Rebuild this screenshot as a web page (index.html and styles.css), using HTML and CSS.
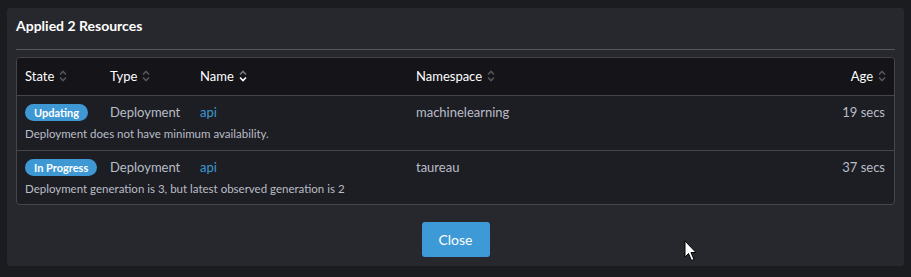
FILE: index.html
```html
<!DOCTYPE html>
<html>
<head>
<meta charset="utf-8">
<link rel="stylesheet" href="styles.css">
</head>
<body>
<div class="panel">
  <h2 class="title">Applied 2 Resources</h2>
  <div class="rule"></div>
  <div class="table">
    <div class="row head">
      <div class="c state">State <span class="sort"><svg width="8" height="12" viewBox="0 0 8 12"><path d="M1 4.5 4 1.5 7 4.5M1 7.5 4 10.5 7 7.5" fill="none" stroke="currentColor" stroke-width="1.6"/></svg></span></div>
      <div class="c type">Type <span class="sort"><svg width="8" height="12" viewBox="0 0 8 12"><path d="M1 4.5 4 1.5 7 4.5M1 7.5 4 10.5 7 7.5" fill="none" stroke="currentColor" stroke-width="1.6"/></svg></span></div>
      <div class="c name">Name <span class="sort active"><svg width="8" height="12" viewBox="0 0 8 12"><path d="M1 4.5 4 1.5 7 4.5" fill="none" stroke="#77787c" stroke-width="1.6"/><path d="M1 7.5 4 10.5 7 7.5" fill="none" stroke="#ffffff" stroke-width="1.6"/></svg></span></div>
      <div class="c ns">Namespace <span class="sort"><svg width="8" height="12" viewBox="0 0 8 12"><path d="M1 4.5 4 1.5 7 4.5M1 7.5 4 10.5 7 7.5" fill="none" stroke="currentColor" stroke-width="1.6"/></svg></span></div>
      <div class="c age">Age <span class="sort"><svg width="8" height="12" viewBox="0 0 8 12"><path d="M1 4.5 4 1.5 7 4.5M1 7.5 4 10.5 7 7.5" fill="none" stroke="currentColor" stroke-width="1.6"/></svg></span></div>
    </div>
    <div class="item">
      <div class="row">
        <div class="c state"><span class="badge">Updating</span></div>
        <div class="c type">Deployment</div>
        <div class="c name"><a class="link">api</a></div>
        <div class="c ns">machinelearning</div>
        <div class="c age">19 secs</div>
      </div>
      <div class="msg">Deployment does not have minimum availability.</div>
    </div>
    <div class="item">
      <div class="row">
        <div class="c state"><span class="badge">In Progress</span></div>
        <div class="c type">Deployment</div>
        <div class="c name"><a class="link">api</a></div>
        <div class="c ns">taureau</div>
        <div class="c age">37 secs</div>
      </div>
      <div class="msg">Deployment generation is 3, but latest observed generation is 2</div>
    </div>
  </div>
  <div class="actions">
    <button class="btn">Close</button>
  </div>
</div>
<svg class="cursor" width="14" height="22" viewBox="0 0 14 22"><path d="M1 1V17L4.5 13.5 7.5 20.5 10 19.5 7 12.5H12Z" fill="#fff" stroke="#000" stroke-width="1"/></svg>
</body>
</html>
```

FILE: styles.css
```css
html, body {
  margin: 0;
  padding: 0;
  background: #1b1c20;
  width: 911px;
  height: 277px;
  overflow: hidden;
}
body {
  padding: 8px 7px 0 7px;
  box-sizing: border-box;
  font-family: Lato, "Liberation Sans", sans-serif;
  position: relative;
}
.panel {
  background: #27282d;
  height: 258px;
  border-radius: 3px;
  padding: 0 9px;
  box-sizing: border-box;
}
.title {
  margin: 0;
  padding: 9px 0 0 0;
  height: 40px;
  box-sizing: border-box;
  font-size: 14px;
  font-weight: 700;
  color: #ffffff;
}
.rule {
  height: 1px;
  background: #55565c;
  margin-top: 1px;
}
.table {
  margin-top: 7px;
  border: 1px solid #45464b;
  border-radius: 4px;
  background: #1d1e23;
  overflow: hidden;
}
.row {
  display: flex;
  align-items: center;
  font-size: 13px;
  color: #b9bdc7;
}
.row.head {
  background: #141419;
  height: 38px;
  padding-bottom: 2px;
  box-sizing: border-box;
  color: #ffffff;
  border-bottom: 1px solid #45464b;
}
.c { display: flex; align-items: center; }
.state { width: 85px; padding-left: 8px; }
.type { width: 90px; }
.name { width: 216px; }
.ns { flex: 1; }
.age { justify-content: flex-end; padding-right: 9px; }
.row.head .age { padding-right: 8px; }
.sort {
  display: inline-flex;
  margin-left: 5px;
  color: #55565b;
}
.item {
  border-top: 1px solid #45464b;
  height: 54px;
  box-sizing: border-box;
  padding-top: 7px;
}
.row.head + .item { border-top: 0; height: 54px; }
.item .row { height: 18px; }
.badge {
  background: #3d98d4;
  color: #ffffff;
  font-size: 11px;
  font-weight: 700;
  border-radius: 9px;
  padding: 0 9px;
  height: 17px;
  line-height: 17px;
  display: inline-block;
}
.link { color: #3d98d4; }
.msg {
  padding-left: 8px;
  margin-top: 6px;
  font-size: 11.5px;
  color: #b9bdc7;
}
.actions {
  display: flex;
  justify-content: center;
  padding-top: 17px;
}
.btn {
  background: #3d9ad6;
  border: 0;
  border-radius: 3px;
  color: #ffffff;
  font-family: Lato, "Liberation Sans", sans-serif;
  font-size: 14px;
  width: 68px;
  height: 35px;
}
.cursor {
  position: absolute;
  left: 684px;
  top: 240px;
}
```
